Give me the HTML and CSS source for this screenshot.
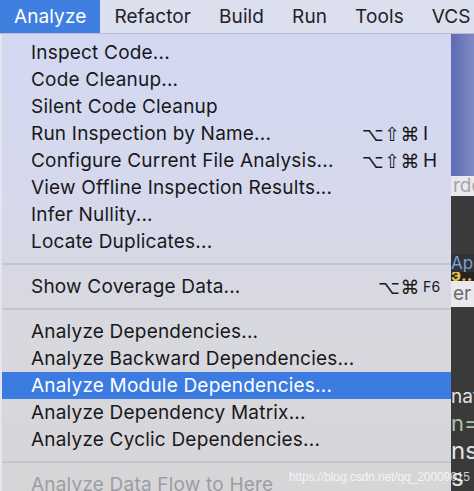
FILE: index.html
```html
<!DOCTYPE html>
<html>
<head>
<meta charset="utf-8">
<link rel="stylesheet" href="styles.css">
</head>
<body>
<div class="screen">
  <div class="menubar">
    <div class="mb-item active">Analyze</div>
    <div class="mb-item">Refactor</div>
    <div class="mb-item">Build</div>
    <div class="mb-item">Run</div>
    <div class="mb-item">Tools</div>
    <div class="mb-item">VCS</div>
  </div>
  <div class="main">
    <div class="menu">
      <div class="row">Inspect Code...</div>
      <div class="row">Code Cleanup...</div>
      <div class="row">Silent Code Cleanup</div>
      <div class="row"><span class="label">Run Inspection by Name...</span><span class="sc"><span class="mods">⌥⇧⌘</span><span class="key">I</span></span></div>
      <div class="row"><span class="label">Configure Current File Analysis...</span><span class="sc"><span class="mods">⌥⇧⌘</span><span class="key">H</span></span></div>
      <div class="row">View Offline Inspection Results...</div>
      <div class="row">Infer Nullity...</div>
      <div class="row">Locate Duplicates...</div>
      <div class="sep"></div>
      <div class="row"><span class="label">Show Coverage Data...</span><span class="sc"><span class="mods">⌥⌘</span><span class="key small">F6</span></span></div>
      <div class="sep"></div>
      <div class="row">Analyze Dependencies...</div>
      <div class="row">Analyze Backward Dependencies...</div>
      <div class="row selected">Analyze Module Dependencies...</div>
      <div class="row">Analyze Dependency Matrix...</div>
      <div class="row">Analyze Cyclic Dependencies...</div>
      <div class="sep"></div>
      <div class="row disabled">Analyze Data Flow to Here</div>
    </div>
    <div class="ide">
      <div class="ide-blue"></div>
      <div class="ide-light">rde</div>
      <div class="ide-dark h62"></div>
      <div class="ide-code app">App</div>
      <div class="ide-code yellow">э..</div>
      <div class="ide-light tall">er</div>
      <div class="ide-dark code-lines">
        <div class="cl white">nat</div>
        <div class="cl green">n=</div>
        <div class="cl white big">ns</div>
        <div class="cl white big">s</div>
      </div>
    </div>
  </div>
  <div class="watermark">https://blog.csdn.net/qq_20009015</div>
</div>
</body>
</html>
```
FILE: styles.css
```css
* { box-sizing: border-box; }
html, body { margin: 0; padding: 0; }
body { width: 474px; height: 491px; overflow: hidden; background: #3a3a3a; }
.screen {
  position: relative;
  width: 474px;
  height: 491px;
  overflow: hidden;
  font-family: "Inter", "Liberation Sans", "DejaVu Sans", sans-serif;
  font-size: 19px;
  color: #18181b;
}
.menubar {
  display: flex;
  height: 34px;
  background: #dcdfee;
  border-bottom: 1px solid #b9bccd;
}
.mb-item {
  padding: 0 14px;
  line-height: 33px;
  color: #222226;
  letter-spacing: 0.1px;
}
.mb-item.active {
  background: #3f7fe0;
  color: #fff;
}
.main {
  display: flex;
  height: 457px;
}
.menu {
  width: 451px;
  padding-top: 5px;
  border-left: 2px solid #e4e5ee;
  background: linear-gradient(to bottom, #d3d8f2 0%, #d6d9ec 35%, #d8d8e0 60%, #d6d6d8 100%);
}
.row {
  display: flex;
  align-items: center;
  height: 27px;
  padding-left: 29px;
  padding-right: 6px;
  white-space: nowrap;
  letter-spacing: 0.2px;
}
.label { flex: 1; }
.sc { display: flex; align-items: center; }
.mods {
  font-family: "DejaVu Sans", sans-serif;
  font-size: 19px;
  letter-spacing: 0.5px;
  text-align: right;
}
.key {
  width: 22px;
  margin-left: 3px;
}
.key.small { font-size: 14px; }
.row.selected {
  background: #3b7be2;
  color: #fff;
}
.row.disabled { color: #9d9da2; }
.sep {
  height: 18px;
  display: flex;
  align-items: center;
}
.sep::before {
  content: "";
  display: block;
  width: 100%;
  height: 2px;
  background: #c4c5cd;
}
.ide {
  flex: 1;
  display: flex;
  flex-direction: column;
  overflow: hidden;
  white-space: nowrap;
}
.ide-blue {
  height: 149px;
  background: linear-gradient(to right, #5e6bb3, #7f89c6);
}
.ide-light {
  height: 20px;
  background: #e9e9ee;
  color: #a5a5aa;
  line-height: 20px;
  padding-left: 2px;
}
.ide-light.tall { height: 26px; line-height: 26px; color: #6c6c70; }
.ide-dark { background: #3b3b3d; }
.h62 { height: 62px; }
.ide-code {
  font-size: 17px;
}
.app { height: 18px; line-height: 18px; background: #313335; color: #7f9fd8; }
.yellow { height: 9px; line-height: 6px; background: #232323; color: #e5c24a; overflow: hidden; font-weight: bold; }
.code-lines {
  flex: 1;
  padding-top: 76px;
  background: #3a3a3b;
}
.cl { height: 27px; line-height: 27px; }
.cl.white { color: #e2e2e2; }
.cl.green { color: #a9c3a5; font-size: 22px; }
.cl.big { font-size: 24px; }
.watermark {
  position: absolute;
  left: 289px;
  top: 470px;
  font-family: "Liberation Sans", sans-serif;
  font-size: 12px;
  letter-spacing: -0.1px;
  color: rgba(255, 255, 255, 0.75);
  white-space: nowrap;
}
```
